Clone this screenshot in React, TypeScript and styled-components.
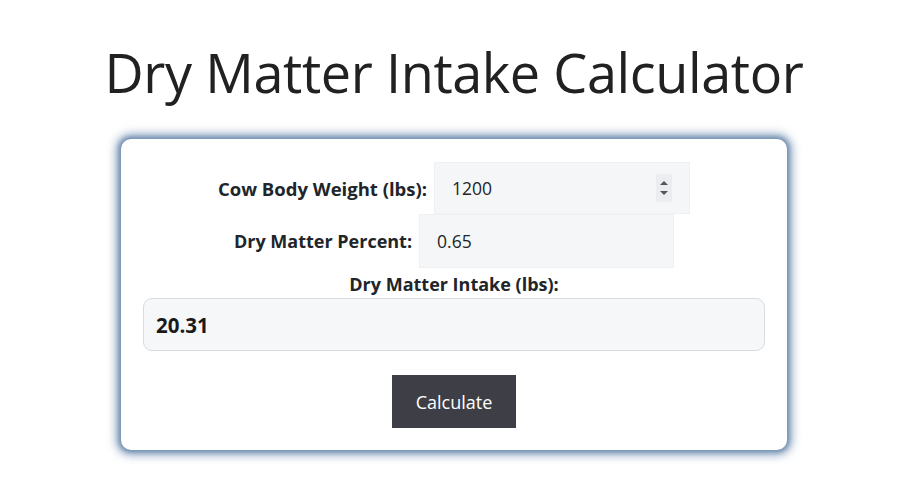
import React from "react";
import styled, { createGlobalStyle } from "styled-components";

const Global = createGlobalStyle`
  html, body { margin: 0; padding: 0; background: #ffffff; }
  body { font-family: "Open Sans", "Noto Sans", sans-serif; color: #212529; }
  * { box-sizing: border-box; }
`;

const Page = styled.div`
  width: 900px;
  min-height: 499px;
  padding: 34px 0 40px 8px;
  display: flex;
  flex-direction: column;
  align-items: center;
`;

const Title = styled.h1`
  margin: 0;
  font-size: 54px;
  font-weight: 400;
  line-height: 76px;
  color: #212121;
  letter-spacing: -0.4px;
`;

const Card = styled.div`
  margin-top: 29px;
  width: 666px;
  background: #fff;
  border-radius: 10px;
  box-shadow: 0 0 10px 5px rgba(110, 140, 178, 0.75), 0 0 4px 2px rgba(110, 138, 170, 0.9);
  padding: 23px 22px 22px;
  display: flex;
  flex-direction: column;
  align-items: center;
`;

const Row = styled.div`
  display: flex;
  align-items: center;
  justify-content: center;
  gap: 7px;
`;

const Label = styled.label<{ $wide?: boolean }>`
  font-size: ${(p) => (p.$wide ? "18.5px" : "18px")};
  font-weight: 700;
  color: #212529;
`;

const Field = styled.div<{ $w: number; $h: number }>`
  width: ${(p) => p.$w}px;
  height: ${(p) => p.$h}px;
  background: #f5f6f8;
  border: 1px solid #eff0f2;
  display: flex;
  align-items: center;
  padding: 0 17px 0 17px;
`;

const Input = styled.input`
  flex: 1;
  min-width: 0;
  border: none;
  background: transparent;
  font-family: inherit;
  font-size: 17.5px;
  color: #212529;
  outline: none;
  padding: 0;
`;

const Spinner = styled.div`
  width: 16px;
  height: 28px;
  background: #ebedf0;
  display: flex;
  flex-direction: column;
  align-items: center;
  justify-content: center;
  gap: 6px;
`;

const Arrow = styled.span<{ $up?: boolean }>`
  width: 0;
  height: 0;
  border-left: 4px solid transparent;
  border-right: 4px solid transparent;
  ${(p) => (p.$up ? "border-bottom: 4px solid #555;" : "border-top: 4px solid #555;")}
`;

const ResultLabel = styled.div`
  margin-top: 4px;
  font-size: 18px;
  font-weight: 700;
  line-height: 24px;
`;

const Result = styled.div`
  margin-top: 2px;
  width: 100%;
  height: 53px;
  border: 1px solid #d8dbdf;
  border-radius: 9px;
  background: #f6f7f9;
  display: flex;
  align-items: center;
  padding: 0 12px;
  font-size: 20.5px;
  font-weight: 700;
  color: #1a1a1a;
`;

const Button = styled.button`
  margin-top: 24px;
  width: 124px;
  height: 53px;
  border: none;
  background: #3e3f46;
  color: #fff;
  font-family: inherit;
  font-size: 18px;
  cursor: pointer;
`;

export default function App() {
  return (
    <>
      <Global />
      <Page>
        <Title>Dry Matter Intake Calculator</Title>
        <Card>
          <Row>
            <Label $wide>Cow Body Weight (lbs):</Label>
            <Field $w={256} $h={52}>
              <Input defaultValue="1200" />
              <Spinner>
                <Arrow $up />
                <Arrow />
              </Spinner>
            </Field>
          </Row>
          <Row>
            <Label>Dry Matter Percent:</Label>
            <Field $w={255} $h={54}>
              <Input defaultValue="0.65" />
            </Field>
          </Row>
          <ResultLabel>Dry Matter Intake (lbs):</ResultLabel>
          <Result>20.31</Result>
          <Button>Calculate</Button>
        </Card>
      </Page>
    </>
  );
}
